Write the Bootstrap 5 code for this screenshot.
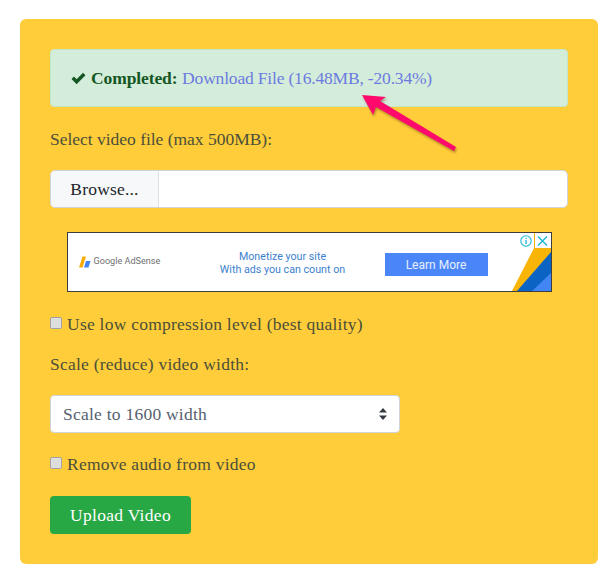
<!DOCTYPE html>
<html lang="en">
<head>
<meta charset="utf-8">
<title>Upload Video</title>
<link href="https://cdn.jsdelivr.net/npm/bootstrap@5.3.0/dist/css/bootstrap.min.css" rel="stylesheet">
<style>
body { background:#fff; font-family:"Liberation Serif",serif; font-size:17.5px; letter-spacing:.24px; color:#4b4f3a; }
.panel { position:relative; width:578px; margin:19px 0 0 20px; padding:30px; background:#ffcd39; border-radius:6px; height:545px; }
.note { height:58px; padding:0 20px; background:#d4edda; border:1px solid #c3e6cb; border-radius:4px; color:#155724; margin-bottom:20px; }
.note strong { letter-spacing:-.1px; }
.note a { color:#6c7ae0; text-decoration:none; letter-spacing:-.18px; }
.tick { width:15px; height:13px; margin-right:5px; }
.lbl { line-height:24px; margin-bottom:19px; }
.tight { letter-spacing:-.02px; }
.filebox { height:38px; background:#fff; border:1px solid #ced4da; border-radius:5px; overflow:hidden; margin-bottom:24px; }
.filebtn { width:108px; background:#f6f8fa; border-right:1px solid #dee2e6; color:#212529; letter-spacing:.2px; }
.adbox { position:relative; width:485px; height:60px; background:#fff; border:1px solid #3d3d3d; margin:0 auto 20px; overflow:hidden; font-family:Roboto,sans-serif; letter-spacing:0; }
.adlogo { width:100px; margin-left:11px; font-size:9.1px; color:#6f6f6f; gap:3px; }
.adtext { width:200px; margin:1px 0 0 4px; font-size:10.7px; line-height:13px; color:#3c7fd0; text-align:center; }
.adbtn { width:103px; height:23px; margin:5px 0 0 2px; background:#4a86f7; color:#e8f0ff; font-size:12px; }
.adcorner { position:absolute; right:0; top:0; }
.chk { width:12px; height:12px; margin:-2px 5px 0 0; background:#dedede; border:1px solid #a0a0a0; border-radius:2px; flex:none; box-shadow:inset 0 0 1px #fff; }
.optrow { line-height:24px; margin-bottom:16px; }
.pick { width:350px; height:38px; padding:0 12px; background:#fff; border:1px solid #ced4da; border-radius:4px; color:#556070; margin-bottom:19px; }
.upbtn { width:141px; height:38px; background:#28a745; color:#fff; border:0; border-radius:4px; font-size:17.5px; letter-spacing:.3px; padding:0; margin-top:0; }
.optrow.lastopt { margin-bottom:20px; }
.pointer { position:absolute; left:-20px; top:-19px; pointer-events:none; filter:drop-shadow(1px 2px 1px rgba(90,60,20,.45)); }
</style>
</head>
<body>
<div class="panel">
  <div class="note d-flex align-items-center">
    <svg class="tick" viewBox="0 0 15 13"><path d="M0.5 7 L3 4.5 L5.6 7.2 L12 0.8 L14.5 3.3 L5.6 12.2 Z" fill="#155724"/></svg>
    <span><strong>Completed:</strong> <a href="#">Download File (16.48MB, -20.34%)</a></span>
  </div>
  <div class="lbl tight">Select video file (max 500MB):</div>
  <div class="filebox d-flex">
    <div class="filebtn d-flex align-items-center justify-content-center">Browse...</div>
  </div>
  <div class="adbox d-flex align-items-center">
    <div class="adlogo d-flex align-items-center">
      <svg width="12" height="12" viewBox="0 0 12 12"><path d="M3.5 0.5 H7 L3.5 11.5 H0 Z" fill="#f9ab00"/><path d="M7 5 H11.5 L9.5 11.5 H5 Z" fill="#4285f4"/></svg>
      <span>Google AdSense</span>
    </div>
    <div class="adtext">Monetize your site<br>With ads you can count on</div>
    <div class="adbtn d-flex align-items-center justify-content-center">Learn More</div>
    <svg class="adcorner" width="39" height="58" viewBox="0 0 39 58">
      <path d="M0 58 L22 15 H39 V58 Z" fill="#f9b507"/>
      <path d="M39 19 V58 H5 Z" fill="#0b63c4"/>
      <path d="M39 40 V58 H20 Z" fill="#4285f4"/>
      <rect x="22" y="0" width="1" height="15" fill="#f9b507"/>
      <circle cx="14" cy="8" r="5.2" fill="none" stroke="#19b5d8" stroke-width="1.1"/>
      <rect x="13.4" y="7" width="1.3" height="4" fill="#19b5d8"/><rect x="13.4" y="4.8" width="1.3" height="1.3" fill="#19b5d8"/>
      <path d="M26 3.5 L35 12.5 M35 3.5 L26 12.5" stroke="#19b5d8" stroke-width="1.4" fill="none"/>
    </svg>
  </div>
  <div class="optrow d-flex align-items-center"><span class="chk"></span>Use low compression level (best quality)</div>
  <div class="lbl">Scale (reduce) video width:</div>
  <div class="pick d-flex align-items-center justify-content-between">
    <span>Scale to 1600 width</span>
    <svg width="8" height="12" viewBox="0 0 8 12"><path d="M4 0 L8 4.6 H0 Z M4 12 L0 7.4 H8 Z" fill="#343a40"/></svg>
  </div>
  <div class="optrow lastopt d-flex align-items-center"><span class="chk"></span>Remove audio from video</div>
  <button type="button" class="btn upbtn">Upload Video</button>
  <svg class="pointer" width="616" height="583" viewBox="0 0 616 583"><path d="M362 95 L386 97 L380 101 L456 147 L454 151 L376 107 L373 115 Z" fill="#ff0a6c"/></svg>
</div>
<script src="https://cdn.jsdelivr.net/npm/bootstrap@5.3.0/dist/js/bootstrap.bundle.min.js"></script>
</body>
</html>
